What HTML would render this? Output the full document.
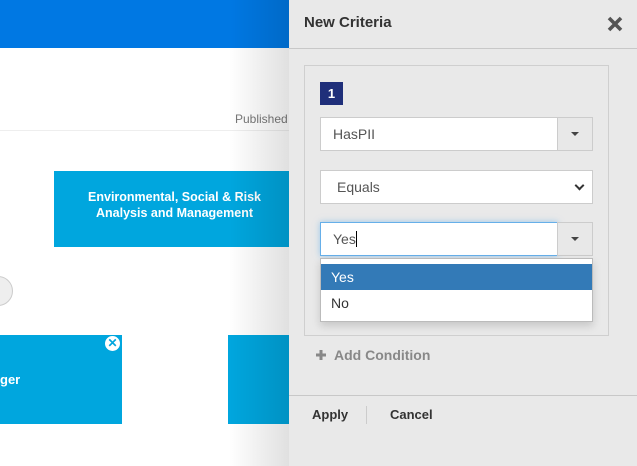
<!DOCTYPE html>
<html><head><style>
*{box-sizing:border-box;margin:0;padding:0}
body{width:637px;height:466px;overflow:hidden;position:relative;background:#fff;font-family:"Liberation Sans",Arial,sans-serif}
.a{position:absolute}
</style></head><body>
<div class="a" style="left:0;top:0;width:289px;height:48px;background:#0078e3"></div>
<div class="a" style="left:235px;top:112px;font-size:12px;color:#777">Published</div>
<div class="a" style="left:0;top:130px;width:289px;height:1px;background:#eee"></div>
<div class="a" style="left:54px;top:171px;width:235px;height:76px;background:#00a6de;color:#fff;font-weight:bold;font-size:12.5px;text-align:center;padding-top:18px;line-height:16px;padding-left:6px">Environmental, Social &amp; Risk<br>Analysis and Management</div>
<div class="a" style="left:-20px;top:276px;width:33px;height:30px;border-radius:15px;background:#eee;border:1px solid #ccc;font-size:12px;line-height:28px;text-align:right;padding-right:14px">d</div>
<div class="a" style="left:0;top:335px;width:122px;height:89px;background:#00a6de;color:#fff;font-weight:bold;font-size:13px;padding-top:37px">ger</div>
<div class="a" style="left:105px;top:336px;width:15px;height:15px;border-radius:8px;background:#fff;color:#00a6de;font-size:12px;font-weight:bold;line-height:15px;text-align:center">✕</div>
<div class="a" style="left:228px;top:335px;width:61px;height:89px;background:#00a6de"></div>
<div class="a" style="left:229px;top:0;width:60px;height:466px;background:linear-gradient(to right,rgba(0,0,0,0),rgba(0,0,0,0.12))"></div>

<div class="a" style="left:289px;top:0;width:348px;height:466px;background:#e9e9e9"></div>
<div class="a" style="left:304px;top:14px;font-size:15px;font-weight:bold;color:#333">New Criteria</div>
<svg class="a" style="left:607px;top:16px" width="16" height="16" viewBox="0 0 16 16"><path d="M2 2L14 14M14 2L2 14" stroke="#555" stroke-width="3.6"/></svg>
<div class="a" style="left:289px;top:48px;width:348px;height:1px;background:#c8c8c8"></div>
<div class="a" style="left:304px;top:65px;width:305px;height:271px;border:1px solid #cfcfcf"></div>
<div class="a" style="left:320px;top:82px;width:23px;height:23px;background:#1f2f7a;color:#fff;font-size:13px;font-weight:bold;text-align:center;line-height:23px">1</div>
<div class="a" style="left:320px;top:117px;width:238px;height:34px;background:#fff;border:1px solid #ccc;font-size:14px;color:#555;padding:8px 12px">HasPII</div>
<div class="a" style="left:557px;top:117px;width:36px;height:34px;background:#e8e8e8;border:1px solid #ccc"></div>
<div class="a" style="left:571px;top:132px;border:4px solid transparent;border-top:4px solid #444;border-bottom:0"></div>
<div class="a" style="left:320px;top:170px;width:273px;height:34px;background:#fff;border:1px solid #ccc;font-size:14px;color:#555;padding:8px 16px">Equals</div>
<div class="a" style="left:576px;top:182px;width:7px;height:7px;border-right:2px solid #333;border-bottom:2px solid #333;transform:rotate(45deg)"></div>
<div class="a" style="left:320px;top:222px;width:238px;height:34px;background:#fff;border:1px solid #66afe9;box-shadow:0 0 6px rgba(102,175,233,.6);font-size:14px;color:#555;padding:8px 12px">Yes<span style="border-left:1px solid #000;margin-left:0"></span></div>
<div class="a" style="left:557px;top:222px;width:36px;height:34px;background:#e8e8e8;border:1px solid #ccc"></div>
<div class="a" style="left:571px;top:237px;border:4px solid transparent;border-top:4px solid #444;border-bottom:0"></div>
<div class="a" style="left:320px;top:258px;width:273px;height:64px;background:#fff;border:1px solid #bbb;box-shadow:0 4px 8px rgba(0,0,0,.15)"></div>
<div class="a" style="left:321px;top:264px;width:271px;height:26px;background:#337ab7;color:#fff;font-size:14px;padding:5px 10px">Yes</div>
<div class="a" style="left:321px;top:290px;width:271px;height:26px;color:#333;font-size:14px;padding:5px 10px">No</div>
<svg class="a" style="left:315px;top:349px" width="12" height="12" viewBox="0 0 12 12"><path d="M6 1V11M1 6H11" stroke="#888" stroke-width="3"/></svg>
<div class="a" style="left:334px;top:347px;font-size:14px;font-weight:bold;color:#888">Add Condition</div>
<div class="a" style="left:289px;top:395px;width:348px;height:1px;background:#c8c8c8"></div>
<div class="a" style="left:312px;top:407px;font-size:13px;font-weight:bold;color:#333">Apply</div>
<div class="a" style="left:366px;top:406px;width:1px;height:18px;background:#ccc"></div>
<div class="a" style="left:390px;top:407px;font-size:13px;font-weight:bold;color:#333">Cancel</div>
</body></html>
